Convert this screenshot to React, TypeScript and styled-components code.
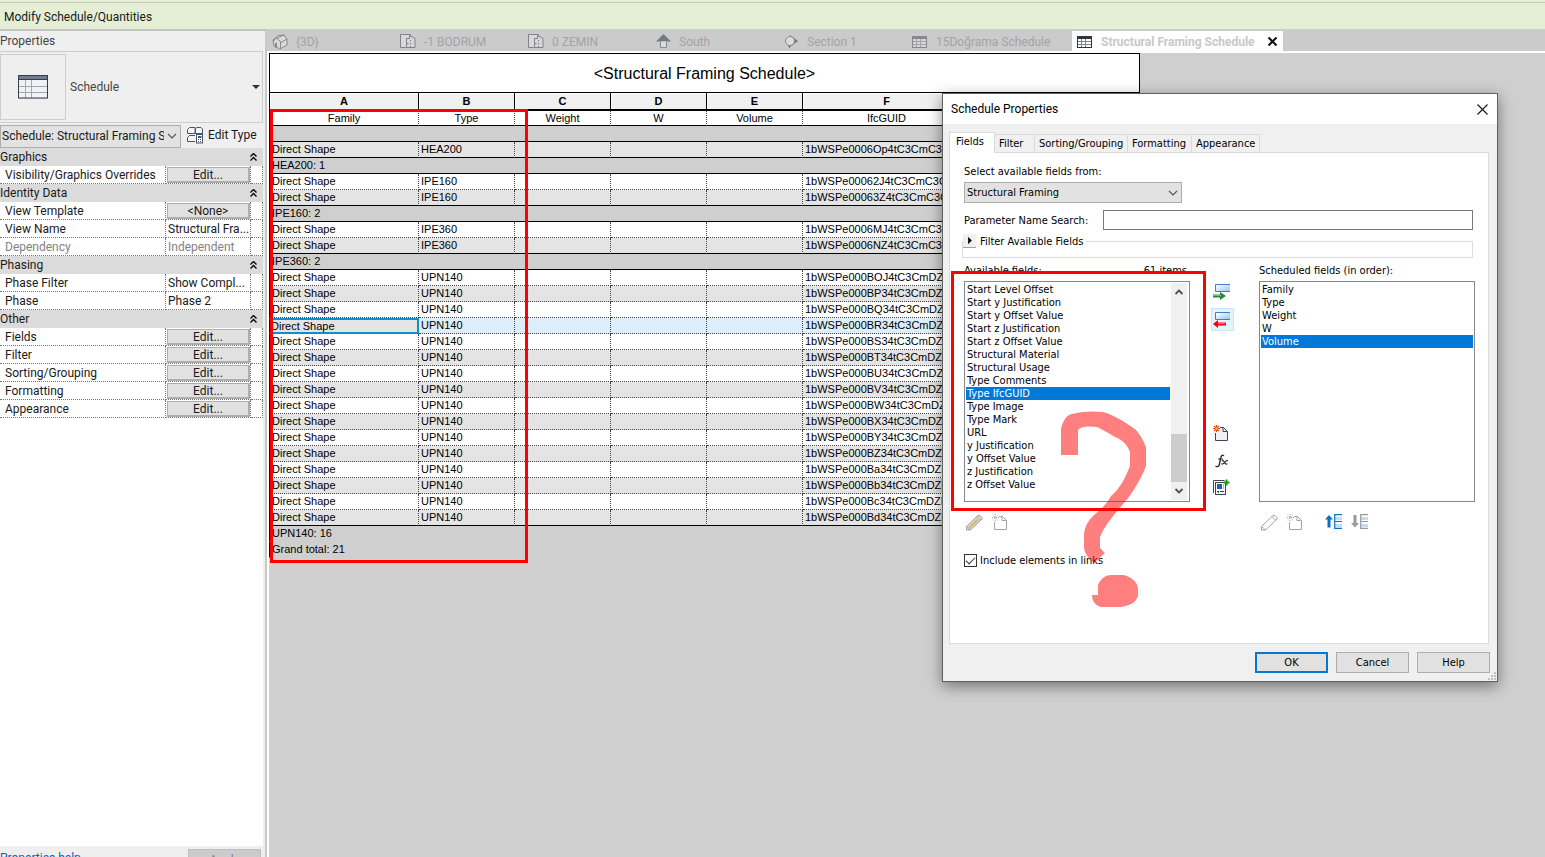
import React from "react";
import styled, { createGlobalStyle, css } from "styled-components";

const uiFont = `Roboto, "Noto Sans", sans-serif`;
const dialogFont = `"DejaVu Sans Condensed", "Noto Sans", sans-serif`;
const gridFont = `"Liberation Sans", Arial, sans-serif`;

const GlobalStyle = createGlobalStyle`
  *, *::before, *::after { box-sizing: border-box; }
  body { margin: 0; background: #cfcfcf; overflow: hidden; }
  button, input, select { font: inherit; color: inherit; margin: 0; padding: 0; }
  svg { display: block; flex: none; }
`;

/* ---------- application shell ---------- */

const Shell = styled.div`
  position: relative;
  display: flex;
  flex-direction: column;
  height: 100vh;
  overflow: hidden;
  font: 12px/18px ${uiFont};
  color: #1a1a1a;
`;

const RibbonEdge = styled.div`
  height: 3px;
  background: #e4efd6;
  border-bottom: 1px solid #c6c9c2;
`;

const ContextBar = styled.header`
  height: 26px;
  padding: 5px 4px;
  background: #e4efd6;
`;

const Workspace = styled.div`
  flex: 1;
  min-height: 0;
  display: flex;
`;

/* ---------- properties palette ---------- */

const Palette = styled.aside`
  flex: none;
  width: 267px;
  display: flex;
  flex-direction: column;
  padding-right: 2px;
  margin-bottom: -16px;
  background: #efefef;
  border-top: 2px solid #c4c4c4;
  border-right: 2px solid #c8c8c8;
`;

const PaletteTitle = styled.h2`
  margin: 0;
  height: 20px;
  font-size: 12px;
  line-height: 21px;
  font-weight: 400;
  color: #444;
`;

const TypePicker = styled.div`
  display: flex;
  align-items: center;
  height: 72px;
  padding-right: 2px;
  border: solid #cdcdcd;
  border-width: 1px 1px 1px 0;
  color: #444;
`;

const TypeThumb = styled.div`
  display: flex;
  align-items: center;
  justify-content: center;
  width: 66px;
  height: 66px;
  margin-right: 4px;
  border: 1px solid #cdcdcd;
`;

const Grow = styled.span`
  flex: 1;
`;

const TypeRow = styled.div`
  display: flex;
  align-items: center;
  height: 25px;
  padding-top: 1px;
  gap: 6px;
`;

const SelectBox = styled.label<{ $w: number; $h: number; $pad: number; $top?: number }>`
  position: relative;
  display: block;
  flex: none;
  width: ${(p) => p.$w}px;
  height: ${(p) => p.$h}px;
  margin-top: ${(p) => p.$top ?? 0}px;
  select {
    appearance: none;
    display: block;
    width: 100%;
    height: 100%;
    padding: 0 16px 0 ${(p) => p.$pad}px;
    border: 1px solid #adadad;
    border-radius: 0;
    background: #e2e2e2;
    overflow: hidden;
  }
  svg {
    position: absolute;
    right: 4px;
    top: 50%;
    margin-top: -3px;
    pointer-events: none;
  }
`;

const EditTypeButton = styled.button`
  display: flex;
  align-items: center;
  gap: 4px;
  padding-bottom: 2px;
  border: 0;
  background: none;
  white-space: nowrap;
`;

const PropertyArea = styled.div`
  flex: 1;
  min-height: 0;
  overflow: hidden;
  background: #fff;
`;

const PropertyTable = styled.table`
  width: 100%;
  table-layout: fixed;
  border-collapse: separate;
  border-spacing: 0;
  td, th {
    height: 18px;
    padding: 0;
    line-height: 16px;
    font-weight: 400;
    text-align: left;
    white-space: nowrap;
    overflow: hidden;
  }
`;

const GroupCell = styled.th`
  background: #dbdbdb;
  div {
    display: flex;
    justify-content: space-between;
    align-items: center;
    padding-right: 5px;
  }
`;

const PropCell = styled.td<{ $muted?: boolean; $inset?: number }>`
  border: 0 dotted #777;
  border-width: 0 1px 1px 0;
  color: ${(p) => (p.$muted ? "#828282" : "#1a1a1a")};
  && {
    padding-left: ${(p) => p.$inset ?? 0}px;
  }
`;

const CellButton = styled.button`
  display: block;
  width: 83px;
  height: 16px;
  margin-left: 1px;
  line-height: 14px;
  background: #e1e1e1;
  border: solid #adadad;
  border-width: 1px 2px 2px 1px;
`;

const PaletteFooter = styled.footer`
  display: flex;
  justify-content: space-between;
  align-items: flex-start;
  height: 27px;
  padding: 3px 2px 0 0;
  a {
    color: #0a5fc4;
    line-height: 19px;
    text-decoration: none;
  }
  button {
    width: 73px;
    height: 22px;
    color: #838383;
    background: #ccc;
    border: 1px solid #bfbfbf;
  }
`;

/* ---------- document area ---------- */

const Documents = styled.main`
  flex: 1;
  min-width: 0;
  display: flex;
  flex-direction: column;
  background: #cfcfcf;
`;

const TabStrip = styled.nav`
  display: flex;
  height: 22px;
  padding: 2px 0 0 0;
  background: #cbcbcb;
`;

const ViewTab = styled.button<{ $active?: boolean; $wide?: boolean }>`
  display: flex;
  align-items: center;
  gap: 8px;
  width: ${(p) => (p.$active ? 211 : p.$wide ? 165 : 128)}px;
  padding: 1px 5px 0;
  border: 0;
  text-align: left;
  white-space: nowrap;
  color: ${(p) => (p.$active ? "#c8c8c8" : "#a3a3a3")};
  background: ${(p) => (p.$active ? "#fff" : "transparent")};
  font-weight: ${(p) => (p.$active ? 700 : 400)};
  & > span {
    flex: 1;
  }
`;

const Canvas = styled.div`
  position: relative;
  flex: 1;
  border: solid #fff;
  border-width: 2px 0 0 2px;
  font: 11px/15px ${gridFont};
  color: #000;
`;

const Sheet = styled.table`
  width: 871px;
  table-layout: fixed;
  border-collapse: separate;
  border-spacing: 0;
  caption {
    height: 40px;
    border: 1px solid #000;
    background: #fff;
    font-size: 16px;
    line-height: 39px;
  }
  th, td {
    padding: 0 2px;
    height: 16px;
    white-space: nowrap;
    overflow: hidden;
    text-align: left;
  }
  tr > :first-child {
    border-left: 1px solid #000;
  }
`;

const LetterCell = styled.th`
  && {
    height: 18px;
    text-align: center;
    background: #f0f0f0;
    border-right: 1px solid #000;
    border-bottom: 2px solid #000;
    box-shadow: inset 1px 1px #fff;
  }
`;

const HeadCell = styled.th`
  && {
    height: 15px;
    line-height: 14px;
    font-weight: 400;
    text-align: center;
    background: #fff;
    border-right: 1px dotted #444;
    border-bottom: 1px solid #000;
  }
`;

const BandCell = styled.td<{ $ruled?: boolean }>`
  background: #cfcfcf;
  border-bottom: 1px solid ${(p) => (p.$ruled ? "#000" : "#cfcfcf")};
`;

type Tone = "plain" | "shade" | "picked";
const tones: Record<Tone, string> = { plain: "#fff", shade: "#e4e4e4", picked: "#dbeef9" };

const DataCell = styled.td<{ $tone: Tone; $last: boolean; $focus?: boolean }>`
  background: ${(p) => tones[p.$tone]};
  border-right: 1px dotted #444;
  border-bottom: 1px ${(p) => (p.$last ? "solid #000" : "dotted #444")};
  ${(p) =>
    p.$focus &&
    css`
      && {
        background: #e4e4e4;
        line-height: 12px;
        padding: 0 1px;
        border: solid #0c8fd0;
        border-width: 2px;
      }
    `}
`;

const Frame = styled.div<{ $x: number; $y: number; $w: number; $h: number }>`
  position: absolute;
  left: ${(p) => p.$x}px;
  top: ${(p) => p.$y}px;
  width: ${(p) => p.$w}px;
  height: ${(p) => p.$h}px;
  border: 3px solid #f00;
  pointer-events: none;
`;

/* ---------- schedule properties dialog ---------- */

const Dialog = styled.section`
  position: absolute;
  left: 942px;
  top: 93px;
  width: 556px;
  height: 589px;
  display: flex;
  flex-direction: column;
  background: #f0f0f0;
  border: 1px solid #5f5f5f;
  box-shadow: 0 4px 14px rgba(0, 0, 0, 0.45);
  font: 11px/13px ${dialogFont};
  color: #000;
`;

const DialogTitle = styled.div`
  display: flex;
  align-items: center;
  justify-content: space-between;
  height: 30px;
  padding: 0 9px 0 8px;
  background: #fff;
  font: 12px/18px ${uiFont};
  h1 {
    margin: 0;
    font: inherit;
  }
`;

const PlainButton = styled.button<{ $pad?: boolean }>`
  display: flex;
  padding: ${(p) => (p.$pad ? "6px 3px" : "0")};
  border: 0;
  background: none;
`;

const DialogTabs = styled.div`
  display: flex;
  align-items: flex-end;
  height: 28px;
  padding-left: 6px;
`;

const DialogTab = styled.button<{ $active?: boolean; $w: number }>`
  width: ${(p) => p.$w}px;
  height: ${(p) => (p.$active ? 21 : 18)}px;
  border: 1px solid #dadada;
  border-width: 1px 1px 0 ${(p) => (p.$active ? 1 : 0)}px;
  margin-bottom: ${(p) => (p.$active ? -1 : 0)}px;
  padding: 0 0 ${(p) => (p.$active ? 3 : 0)}px ${(p) => (p.$active ? 6 : 4)}px;
  text-align: left;
  z-index: ${(p) => (p.$active ? 1 : 0)};
  background: ${(p) => (p.$active ? "#fff" : "#f0f0f0")};
  white-space: nowrap;
`;

const DialogPane = styled.div`
  flex: 1;
  display: flex;
  flex-direction: column;
  margin: 0 8px 0 6px;
  padding: 12px 13px 0 14px;
  background: #fff;
  border: 1px solid #dadada;
`;

const SearchRow = styled.label`
  display: flex;
  align-items: center;
  justify-content: space-between;
  margin: 7px 2px 0 0;
  input {
    width: 370px;
    height: 20px;
    border: 1px solid #7a7a7a;
    background: #fff;
  }
`;

const FilterGroup = styled.fieldset`
  height: 24px;
  margin: 4px 2px 6px -2px;
  padding: 0;
  border: 1px solid #dcdcdc;
  legend {
    padding: 0 3px 0 0;
  }
`;

const Disclosure = styled.button`
  display: flex;
  align-items: center;
  gap: 4px;
  border: 0;
  background: #fff;
  svg {
    background: #f0f0f0;
    border-bottom: 1px solid #a0a0a0;
  }
`;

const Columns = styled.div`
  display: grid;
  grid-template-columns: 226px 69px 1fr;
`;

const ListHead = styled.div`
  display: flex;
  justify-content: space-between;
  height: 17px;
  padding-right: 3px;
`;

const ListBox = styled.div`
  display: flex;
  height: 221px;
  padding: 1px;
  border: 1px solid #828790;
  background: #fff;
  ul {
    flex: 1;
    margin: 0;
    padding: 0;
    list-style: none;
  }
`;

const Item = styled.li<{ $on?: boolean }>`
  height: 13px;
  padding-left: 1px;
  line-height: 14px;
  white-space: nowrap;
  color: ${(p) => (p.$on ? "#fff" : "#000")};
  background: ${(p) => (p.$on ? "#0078d7" : "transparent")};
`;

const ScrollBar = styled.div`
  display: flex;
  flex-direction: column;
  width: 16px;
  margin: 0 1px;
  background: #f0f0f0;
`;

const ScrollThumb = styled.div`
  height: 48px;
  margin-top: auto;
  background: #cdcdcd;
`;

const Transfer = styled.div`
  display: flex;
  flex-direction: column;
  align-items: flex-start;
  padding: 16px 0 0 21px;
`;

const IconButton = styled.button<{ $hot?: boolean; $gap?: number }>`
  display: flex;
  align-items: center;
  justify-content: flex-start;
  padding-left: 1px;
  width: 23px;
  height: 23px;
  margin-top: ${(p) => p.$gap ?? 0}px;
  border: 1px solid ${(p) => (p.$hot ? "#cce4f7" : "transparent")};
  background: ${(p) => (p.$hot ? "#e5f1fb" : "transparent")};
`;

const ListTools = styled.div`
  display: flex;
  gap: 9px;
  margin-top: 12px;
  padding-left: 2px;
  button:nth-child(3) {
    margin-left: 13px;
  }
`;

const CheckLabel = styled.label`
  display: flex;
  align-items: center;
  gap: 3px;
  margin-top: 23px;
  input {
    appearance: none;
    width: 13px;
    height: 13px;
    border: 1px solid #333;
    background: #fff;
    display: grid;
    place-items: center;
  }
  input:checked::before {
    content: "";
    width: 9px;
    height: 5px;
    margin-top: -3px;
    border: solid #333;
    border-width: 0 0 1px 1px;
    transform: rotate(-45deg);
  }
`;

const Actions = styled.div`
  display: flex;
  justify-content: flex-end;
  gap: 8px;
  padding: 8px 7px 8px 0;
`;

const ActionButton = styled.button<{ $primary?: boolean }>`
  width: 73px;
  height: 21px;
  background: #e1e1e1;
  border: ${(p) => (p.$primary ? "2px solid #0078d7" : "1px solid #adadad")};
`;

const Overlay = styled.svg`
  position: absolute;
  left: 118px;
  top: 317px;
  pointer-events: none;
`;

const Grip = styled.svg`
  position: absolute;
  right: 1px;
  bottom: 1px;
`;

/* ---------- icons ---------- */

const Chevron = ({ up = false, bold = false }: { up?: boolean; bold?: boolean }) => (
  <svg width="10" height="6" viewBox="0 0 10 6" fill="none" stroke={bold ? "#505050" : "#555"} strokeWidth={bold ? 1.8 : 1.2}>
    <path d={bold ? (up ? "M1.500 5L5 1.500 8.500 5" : "M1.500 1L5 4.500 8.500 1") : "M1 1l4 4 4-4"} />
  </svg>
);

const DoubleChevron = () => (
  <svg width="9" height="8" viewBox="0 0 9 8" fill="none" stroke="#000" strokeWidth="1.3">
    <path d="M1.5 3.5l3-3 3 3M1.5 7.5l3-3 3 3" />
  </svg>
);

const BigTable = () => (
  <svg width="30" height="25" viewBox="0 0 30 25">
    <rect x="0.5" y="1" width="29" height="23" fill="#cfd2d8" />
    <rect x="1" y="5" width="28" height="18" fill="#f1f2f5" />
    <path d="M1 11.5h28M1 17.5h28M7.5 5v18M13.5 5v18" stroke="#a3a6ad" fill="none" />
    <rect x="0.5" y="0.5" width="29" height="22.500" fill="none" stroke="#363c4a" />
    <rect x="1" y="1" width="28" height="3" fill="#737b8c" />
    <path d="M1 4.500h28" stroke="#363c4a" />
  </svg>
);

const SmallTable = ({ dim = false }: { dim?: boolean }) => {
  const c = dim ? "#85888e" : "#2d3442";
  return (
    <svg width="16" height="14" viewBox="0 0 16 14">
      <rect x="0.500" y="1.500" width="14" height="11" fill={dim ? "#d6d6d6" : "#fff"} stroke={c} />
      <path d="M1 3h14" stroke={c} strokeWidth="2" />
      <path d="M1 6.500h13M1 9.500h13M4.500 4v8M8.500 4v8" stroke={dim ? "#a2a4a8" : "#7c818b"} />
    </svg>
  );
};

const House = () => (
  <svg width="16" height="16" viewBox="0 0 16 16" stroke="#85888c" strokeLinejoin="round">
    <path d="M1 6l5-4.500 6-.5 3 4v6l-7 4-6-3z" fill="#d8d9da" />
    <path d="M1 7l4-3 4 4.500 6-3.500M8.500 8v7M5 4l7-3" fill="none" />
    <path d="M4 9v4.500" strokeWidth="2" />
  </svg>
);

const PlanIcon = () => (
  <svg width="16" height="15" viewBox="0 0 16 15" fill="none" stroke="#808388">
    <path d="M6.500 13.500h-6v-13h10v4" fill="#d8d9db" />
    <path d="M6.500 4.500h3v-3l5.500 3v9h-8.500z" fill="#d6d7d9" />
    <path d="M10.500 6v7M7 9.500h4" strokeDasharray="1.500 1.500" />
  </svg>
);

const ElevationIcon = () => (
  <svg width="15" height="15" viewBox="0 0 15 15">
    <path d="M7.500 0L15 7.500H0z" fill="#77797d" />
    <path d="M4.500 7.500v6h6v-6" fill="#dcdcdc" stroke="#85888c" />
  </svg>
);

const SectionIcon = () => (
  <svg width="15" height="14" viewBox="0 0 15 14">
    <path d="M6 0v14l-2-3M6 0l8 6-8 6z" fill="#77797d" />
    <circle cx="6" cy="6" r="4.500" fill="#dcdcdc" stroke="#85888c" />
  </svg>
);

const CloseGlyph = ({ bold = false }: { bold?: boolean }) => (
  <svg width="11" height="11" viewBox="0 0 11 11" stroke="#111" strokeWidth={bold ? 2 : 1.1}>
    <path d={bold ? "M1.500 1.500l8 8M9.500 1.500l-8 8" : "M.5.5l10 10M10.500.5l-10 10"} />
  </svg>
);

const EditTypeIcon = () => (
  <svg width="17" height="17" viewBox="0 0 17 17" fill="none" stroke="#4d5462">
    <path d="M8 6.500H.5v-4l2-2H8zM15.500 7V2l-1.500-1.500H9.500L8.500 2v4.500H15M8 14.500H.5v-4l2-2H8" fill="#f4f5f7" />
    <rect x="9.500" y="7.500" width="6" height="8.500" fill="#fff" />
    <path d="M11 10h3.500" stroke="#1c63b7" strokeWidth="2" />
    <path d="M11 12.500h1M13 12.500h1M11 14.500h1M13 14.500h1" />
  </svg>
);

const MoveFieldIcon = ({ remove = false }: { remove?: boolean }) => (
  <svg width="17" height="17" viewBox="0 0 17 17">
    <defs>
      <linearGradient id="field" x1="0" y1="0" x2="1" y2="1">
        <stop offset="0" stopColor="#fff" />
        <stop offset="1" stopColor="#8fc4ea" />
      </linearGradient>
    </defs>
    <rect x="3" y="2" width="14" height="7" fill="url(#field)" />
    <path d="M17 1.500H2.500v7H17" fill="none" stroke="#3d7fc0" />
    {remove ? (
      <>
        <path d="M5 13h8" stroke="#f00014" strokeWidth="3" />
        <path d="M0 13l5-4v8z" fill="#f00014" />
        <path d="M5 12.500h7" stroke="#ff6b6b" />
      </>
    ) : (
      <>
        <path d="M0 13h8" stroke="#268a3c" strokeWidth="3" />
        <path d="M13 13L7 9v8z" fill="#268a3c" />
        <path d="M0 12.500h8" stroke="#6dbb80" />
      </>
    )}
  </svg>
);

const NewPageIcon = ({ off = false }: { off?: boolean }) => {
  const c = off ? "#a5a5a5" : "#3f4653";
  return (
    <svg width="16" height="17" viewBox="0 0 16 17" fill="none">
      <path d="M7 2.500h3.500l4 4v9h-12V8" fill={off ? "#fff" : "#f0f1f4"} stroke={c} />
      <path d="M10 2.500V6.500h4" stroke={c} />
      {off ? (
        <path d="M0 .5l6 6M6 .5l-6 6M3 0v7M0 3.500h7" stroke={c} strokeDasharray="1 1" />
      ) : (
        <>
          <path d="M3.500 0v7M0 3.500h7M1 1l5 5M6 1L1 6" stroke="#d8481c" strokeWidth="1.200" />
          <rect x="2.500" y="2.500" width="2" height="2" fill="#ffe23c" />
        </>
      )}
    </svg>
  );
};

const FormulaIcon = () => (
  <svg width="16" height="14" viewBox="-2 0 16 14" fill="none" stroke="#2d2d2d" strokeLinecap="round">
    <path d="M8.500 1.500C7 .5 6 2 5.500 5L4.500 10C4 12.500 2.500 13 1 12.300" strokeWidth="1.400" />
    <path d="M3.500 5h4" />
    <path d="M7.500 6.500c2-.5 2 4.500 4.500 3.500M12.500 6.500C11 6 9 10.500 7 10" strokeWidth="1.300" />
  </svg>
);

const AddReportIcon = () => (
  <svg width="17" height="17" viewBox="0 0 17 17" fill="none">
    <path d="M.5 14V1.500h11" stroke="#3f4653" />
    <rect x="2.500" y="3.500" width="10" height="12" fill="#f4f5f7" stroke="#3f4653" />
    <rect x="4" y="5" width="5" height="5" fill="#1f5fae" />
    <path d="M10.500 5v5" stroke="#b8bcc4" />
    <path d="M4 12.500h2M7 12.500h4M5 13.500h1" stroke="#3f4653" />
    <path d="M13.500.5v6M10.500 3.500h6" stroke="#0ca00c" strokeWidth="2" />
  </svg>
);

const PencilIcon = ({ tinted = false }: { tinted?: boolean }) => (
  <svg width="17" height="17" viewBox="0 0 17 17" stroke="#a0a0a0" strokeLinejoin="round">
    <path d="M.5 16v-3.500L12 1.500h2l2 2v1.500L4.500 16z" fill={tinted ? "#ddd" : "#fff"} />
    {tinted && <path d="M3.500 13.500L12 5.500" stroke="#d9b779" strokeWidth="2.500" />}
    <path d="M11 2.500l3.500 3.500M1 12.500l3.500 3.500" fill="none" />
  </svg>
);

const MoveRowIcon = ({ down = false }: { down?: boolean }) => {
  const c = down ? "#9a9a9a" : "#0f6fb8";
  return (
    <svg width="17" height="15" viewBox="0 0 17 15" fill="none">
      <path d="M10 3h7v3h-7zM10 10h7v3h-7z" fill="#c3def4" />
      <path d="M17 .7H9.700v13.600H17M9.700 7.500H17" stroke={c} strokeWidth="1.200" />
      {down ? (
        <path d="M2.500 1h3v8H8l-4 4.500L0 9h2.500z" fill={c} />
      ) : (
        <path d="M2.500 13.500h3v-8H8L4 1 0 5.500h2.500z" fill={c} />
      )}
    </svg>
  );
};

/* ---------- data ---------- */

type Property = { name: string; value?: string; action?: string; muted?: boolean };

const propertyGroups: { title: string; rows: Property[] }[] = [
  { title: "Graphics", rows: [{ name: "Visibility/Graphics Overrides", action: "Edit..." }] },
  {
    title: "Identity Data",
    rows: [
      { name: "View Template", action: "<None>" },
      { name: "View Name", value: "Structural Fra..." },
      { name: "Dependency", value: "Independent", muted: true },
    ],
  },
  {
    title: "Phasing",
    rows: [
      { name: "Phase Filter", value: "Show Compl..." },
      { name: "Phase", value: "Phase 2" },
    ],
  },
  {
    title: "Other",
    rows: ["Fields", "Filter", "Sorting/Grouping", "Formatting", "Appearance"].map((name) => ({
      name,
      action: "Edit...",
    })),
  },
];

type Line = { total: string } | { type: string; guid: string; tone: Tone; last: boolean };

const section = (type: string, guids: string[], firstShaded = false): Line[] => [
  ...guids.map((guid, i) => ({
    type,
    guid,
    tone: (guid.includes("BR34") ? "picked" : (i % 2 === 1) !== firstShaded ? "shade" : "plain") as Tone,
    last: i === guids.length - 1,
  })),
  { total: `${type}: ${guids.length}` },
];

const upnCodes = ["BOJ4", "BP34", "BQ34", "BR34", "BS34", "BT34", "BU34", "BV34", "BW34", "BX34", "BY34", "BZ34", "Ba34", "Bb34", "Bc34", "Bd34"];

const lines: Line[] = [
  ...section("HEA200", ["1bWSPe0006Op4tC3CmC3Cu"], true),
  ...section("IPE160", ["1bWSPe00062J4tC3CmC3Cu", "1bWSPe00063Z4tC3CmC3Cu"]),
  ...section("IPE360", ["1bWSPe0006MJ4tC3CmC3Cu", "1bWSPe0006NZ4tC3CmC3Cu"]),
  ...section("UPN140", upnCodes.map((code) => `1bWSPe000${code}tC3CmDZK9`)),
];

const availableFields = [
  "Start Level Offset", "Start y Justification", "Start y Offset Value", "Start z Justification",
  "Start z Offset Value", "Structural Material", "Structural Usage", "Type Comments", "Type IfcGUID",
  "Type Image", "Type Mark", "URL", "y Justification", "y Offset Value", "z Justification", "z Offset Value",
];

const scheduledFields = ["Family", "Type", "Weight", "W", "Volume"];

/* ---------- regions ---------- */

const PropertiesPalette = () => (
  <Palette>
    <PaletteTitle>Properties</PaletteTitle>
    <TypePicker>
      <TypeThumb><BigTable /></TypeThumb>
      Schedule
      <Grow />
      <svg width="8" height="4" viewBox="0 0 8 4"><path d="M0 0h8L4 4z" fill="#333" /></svg>
    </TypePicker>
    <TypeRow>
      <SelectBox $w={181} $h={23} $pad={1}>
        <select aria-label="Instance">
          <option>Schedule: Structural Framing S</option>
        </select>
        <Chevron />
      </SelectBox>
      <EditTypeButton><EditTypeIcon />Edit Type</EditTypeButton>
    </TypeRow>
    <PropertyArea>
      <PropertyTable>
        <colgroup>
          <col style={{ width: 166 }} />
          <col style={{ width: 85 }} />
          <col />
        </colgroup>
        {propertyGroups.map((group) => (
          <tbody key={group.title}>
            <tr>
              <GroupCell colSpan={3}><div>{group.title}<DoubleChevron /></div></GroupCell>
            </tr>
            {group.rows.map((row) => (
              <tr key={row.name}>
                <PropCell $inset={5} $muted={row.muted}>{row.name}</PropCell>
                <PropCell $inset={row.action ? 0 : 2} $muted={row.muted}>
                  {row.action ? <CellButton>{row.action}</CellButton> : row.value}
                </PropCell>
                <PropCell />
              </tr>
            ))}
          </tbody>
        ))}
      </PropertyTable>
    </PropertyArea>
    <PaletteFooter>
      <a href="#help">Properties help</a>
      <button>Apply</button>
    </PaletteFooter>
  </Palette>
);

const ScheduleSheet = () => (
  <Sheet>
    <caption>&lt;Structural Framing Schedule&gt;</caption>
    <colgroup>
      {[150, 96, 96, 96, 96, 168, 169].map((w, i) => <col key={i} style={{ width: w }} />)}
    </colgroup>
    <thead>
      <tr>{["A", "B", "C", "D", "E", "F", ""].map((c, i) => <LetterCell key={i}>{c}</LetterCell>)}</tr>
      <tr>
        {["Family", "Type", "Weight", "W", "Volume", "IfcGUID", ""].map((c, i) => <HeadCell key={i}>{c}</HeadCell>)}
      </tr>
    </thead>
    <tbody>
      <tr><BandCell colSpan={7} $ruled /></tr>
      {lines.map((line, i) =>
        "total" in line ? (
          <tr key={i}><BandCell colSpan={7} $ruled={i < lines.length - 1}>{line.total}</BandCell></tr>
        ) : (
          <tr key={i}>
            {["Direct Shape", line.type, "", "", "", line.guid, ""].map((text, c) => (
              <DataCell key={c} $tone={line.tone} $last={line.last} $focus={c === 0 && line.tone === "picked"}>
                {text}
              </DataCell>
            ))}
          </tr>
        )
      )}
      <tr><BandCell colSpan={7}>Grand total: 21</BandCell></tr>
    </tbody>
  </Sheet>
);

const ScheduleDialog = () => (
  <Dialog role="dialog" aria-label="Schedule Properties">
    <DialogTitle>
      <h1>Schedule Properties</h1>
      <PlainButton aria-label="Close"><CloseGlyph /></PlainButton>
    </DialogTitle>
    <DialogTabs>
      <DialogTab $active $w={46}>Fields</DialogTab>
      <DialogTab $w={40}>Filter</DialogTab>
      <DialogTab $w={93}>Sorting/Grouping</DialogTab>
      <DialogTab $w={64}>Formatting</DialogTab>
      <DialogTab $w={68}>Appearance</DialogTab>
    </DialogTabs>
    <DialogPane>
      <label htmlFor="source">Select available fields from:</label>
      <SelectBox $w={218} $h={21} $pad={2} $top={4}>
        <select id="source"><option>Structural Framing</option></select>
        <Chevron />
      </SelectBox>
      <SearchRow>Parameter Name Search:<input type="text" /></SearchRow>
      <FilterGroup>
        <legend>
          <Disclosure>
            <svg width="13" height="14" viewBox="0 0 13 14"><path d="M5 3l4 4-4 4z" /></svg>
            Filter Available Fields
          </Disclosure>
        </legend>
      </FilterGroup>
      <Columns>
        <div>
          <ListHead><span>Available fields:</span><span>61 items</span></ListHead>
          <ListBox>
            <ul role="listbox" aria-label="Available fields">
              {availableFields.map((f) => (
                <Item key={f} role="option" aria-selected={f === "Type IfcGUID"} $on={f === "Type IfcGUID"}>{f}</Item>
              ))}
            </ul>
            <ScrollBar>
              <PlainButton aria-label="Scroll up" $pad><Chevron up bold /></PlainButton>
              <ScrollThumb />
              <PlainButton aria-label="Scroll down" $pad><Chevron bold /></PlainButton>
            </ScrollBar>
          </ListBox>
          <ListTools>
            <PlainButton aria-label="Edit parameter"><PencilIcon tinted /></PlainButton>
            <PlainButton aria-label="Delete parameter"><NewPageIcon off /></PlainButton>
          </ListTools>
        </div>
        <Transfer>
          <IconButton aria-label="Add field"><MoveFieldIcon /></IconButton>
          <IconButton aria-label="Remove field" $hot $gap={5}><MoveFieldIcon remove /></IconButton>
          <IconButton aria-label="New parameter" $gap={91}><NewPageIcon /></IconButton>
          <IconButton aria-label="Add calculated parameter" $gap={4}><FormulaIcon /></IconButton>
          <IconButton aria-label="Combine parameters" $gap={4}><AddReportIcon /></IconButton>
        </Transfer>
        <div>
          <ListHead><span>Scheduled fields (in order):</span></ListHead>
          <ListBox>
            <ul role="listbox" aria-label="Scheduled fields">
              {scheduledFields.map((f) => (
                <Item key={f} role="option" aria-selected={f === "Volume"} $on={f === "Volume"}>{f}</Item>
              ))}
            </ul>
          </ListBox>
          <ListTools>
            <PlainButton aria-label="Edit field"><PencilIcon /></PlainButton>
            <PlainButton aria-label="Delete field"><NewPageIcon off /></PlainButton>
            <PlainButton aria-label="Move up"><MoveRowIcon /></PlainButton>
            <PlainButton aria-label="Move down"><MoveRowIcon down /></PlainButton>
          </ListTools>
        </div>
      </Columns>
      <CheckLabel><input type="checkbox" defaultChecked />Include elements in links</CheckLabel>
    </DialogPane>
    <Actions>
      <ActionButton $primary>OK</ActionButton>
      <ActionButton>Cancel</ActionButton>
      <ActionButton>Help</ActionButton>
    </Actions>
    <Grip width="8" height="8" viewBox="0 0 8 8" fill="#bfbfbf">
      <path d="M6 0h2v2H6zM3 3h2v2H3zM6 3h2v2H6zM0 6h2v2H0zM3 6h2v2H3zM6 6h2v2H6z" />
    </Grip>
    <Frame $x={8} $y={177} $w={255} $h={240} />
    <Overlay width="86" height="198" viewBox="0 0 86 198" fill="#f00" fillOpacity="0.500">
      <path d="M0 44V18C2 9 6 4 11 3C22 0 33 0 42 1C53 4 64 11 75 19C80 25 84 32 85 37V55C81 66 73 79 68 86L57 99C49 109 43 116 39 126V137L44 142L33 152C28 148 23 142 23 136V123C24 114 28 109 33 104C42 97 46 92 50 85C59 78 64 67 69 55V41C66 33 60 28 54 26C46 21 40 18 36 16C28 15 20 15 17 19V44Z" />
      <path d="M31 184H37V174C40 167 45 164 50 164H63C70 166 77 171 77 178V185C75 191 70 194 64 195L60 196H40C34 194 31 190 31 184Z" />
    </Overlay>
  </Dialog>
);

export default function App() {
  return (
    <Shell>
      <GlobalStyle />
      <RibbonEdge />
      <ContextBar>Modify Schedule/Quantities</ContextBar>
      <Workspace>
        <PropertiesPalette />
        <Documents>
          <TabStrip>
            <ViewTab><House /><span>{"{3D}"}</span></ViewTab>
            <ViewTab><PlanIcon /><span>-1 BODRUM</span></ViewTab>
            <ViewTab><PlanIcon /><span>0 ZEMIN</span></ViewTab>
            <ViewTab><ElevationIcon /><span>South</span></ViewTab>
            <ViewTab><SectionIcon /><span>Section 1</span></ViewTab>
            <ViewTab $wide><SmallTable dim /><span>15Doğrama Schedule</span></ViewTab>
            <ViewTab $active><SmallTable /><span>Structural Framing Schedule</span><CloseGlyph bold /></ViewTab>
          </TabStrip>
          <Canvas>
            <ScheduleSheet />
            <Frame $x={1} $y={56} $w={258} $h={454} />
          </Canvas>
        </Documents>
      </Workspace>
      <ScheduleDialog />
    </Shell>
  );
}
